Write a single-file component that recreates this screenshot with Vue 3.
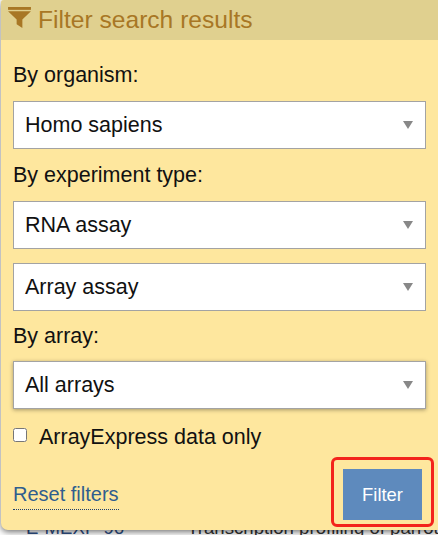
<script setup>
import { ref } from 'vue';

const organism = ref('Homo sapiens');
const experimentType = ref('RNA assay');
const assay = ref('Array assay');
const arrayName = ref('All arrays');
const dataOnly = ref(false);
</script>

<template>
  <div class="page">
    <div class="results-row">
      <span class="results-id">E-MEXP-96</span>
      <span class="results-title">Transcription profiling of parrots</span>
    </div>
    <form class="filter-panel" @submit.prevent>
      <div class="panel-header">
        <svg class="funnel" viewBox="0 0 24 22" aria-hidden="true">
          <path d="M0 0H24V3H0Z" />
          <path d="M0 4.5H24L15 13V22L9 18V13Z" />
        </svg>
        <span>Filter search results</span>
      </div>
      <div class="panel-body">
        <label class="field-label first">By organism:</label>
        <div class="select-box">
          <span>{{ organism }}</span>
          <i class="caret"></i>
        </div>

        <label class="field-label">By experiment type:</label>
        <div class="select-box">
          <span>{{ experimentType }}</span>
          <i class="caret"></i>
        </div>
        <div class="select-box second">
          <span>{{ assay }}</span>
          <i class="caret"></i>
        </div>

        <label class="field-label tight">By array:</label>
        <div class="select-box raised">
          <span>{{ arrayName }}</span>
          <i class="caret"></i>
        </div>

        <label class="check-row">
          <input v-model="dataOnly" type="checkbox" />
          <span>ArrayExpress data only</span>
        </label>

        <div class="panel-footer">
          <a class="reset-link" href="#">Reset filters</a>
          <span class="button-mark">
            <button class="filter-btn" type="submit">Filter</button>
          </span>
        </div>
      </div>
    </form>
  </div>
</template>

<style>
html, body {
  margin: 0;
  background: #fff;
}
</style>

<style scoped>
.page {
  position: relative;
  width: 438px;
  height: 535px;
  overflow: hidden;
  background: #fff;
  font-family: "Liberation Sans", Arial, sans-serif;
}

.results-row {
  position: absolute;
  left: 26px;
  top: 517px;
  display: flex;
  gap: 63px;
  font-size: 18.6px;
  line-height: 21px;
  color: #333;
  white-space: nowrap;
}

.results-id {
  color: #2f4f86;
}

.filter-panel {
  position: absolute;
  left: 1px;
  top: 0;
  width: 437px;
  height: 530px;
  background: #fee79e;
  border-radius: 3px 0 0 7px;
  box-shadow: 0 2px 6px rgba(0, 0, 0, 0.55);
}

.panel-header {
  display: flex;
  align-items: center;
  gap: 7px;
  height: 40px;
  padding: 0 7px;
  box-sizing: border-box;
  background: #e0d08f;
  border-radius: 3px 0 0 0;
  color: #a87725;
  font-size: 24.6px;
}

.funnel {
  flex: none;
  width: 23px;
  height: 21px;
  margin-bottom: 6px;
  fill: #a87725;
}

.panel-body {
  padding: 0 12px;
}

.field-label {
  display: block;
  height: 23px;
  margin: 15px 0 14px;
  font-size: 21.5px;
  line-height: 23px;
  color: #111;
}

.field-label.first {
  margin-top: 24px;
}

.field-label.tight {
  margin-bottom: 13px;
  margin-top: 14px;
}

.select-box {
  display: flex;
  align-items: center;
  justify-content: space-between;
  height: 48px;
  padding: 0 12px 0 11px;
  box-sizing: border-box;
  background: #fff;
  border: 1px solid #a3a3a3;
  font-size: 21.5px;
  color: #111;
}

.select-box.second {
  margin-top: 14px;
}

.select-box.raised {
  box-shadow: 0 1px 4px rgba(0, 0, 0, 0.35);
}

.caret {
  width: 0;
  height: 0;
  border-left: 5px solid transparent;
  border-right: 5px solid transparent;
  border-top: 8px solid #888;
}

.check-row {
  display: flex;
  align-items: center;
  gap: 12px;
  margin-top: 17px;
  font-size: 21.5px;
  line-height: 23px;
  color: #111;
}

.check-row input {
  flex: none;
  width: 14px;
  height: 14px;
  margin: 0 0 5px;
}

.panel-footer {
  display: flex;
  align-items: flex-start;
  justify-content: space-between;
  margin-top: 20px;
}

.reset-link {
  margin-top: 14px;
  color: #2f5e8e;
  font-size: 20px;
  line-height: 23px;
  padding-bottom: 3px;
  text-decoration: none;
  border-bottom: 1px dotted #1f3f6e;
}

.button-mark {
  position: relative;
  display: block;
  margin-right: 4px;
}

/* red annotation round the submit button */
.button-mark::after {
  content: "";
  position: absolute;
  inset: -12px -12px -7px -12px;
  border: 3.5px solid #f3241c;
  border-radius: 6px;
  pointer-events: none;
}

.filter-btn {
  display: block;
  width: 79px;
  height: 51px;
  border: 0;
  background: #5e8abd;
  color: #fff;
  font-family: inherit;
  font-size: 18.4px;
}
</style>
